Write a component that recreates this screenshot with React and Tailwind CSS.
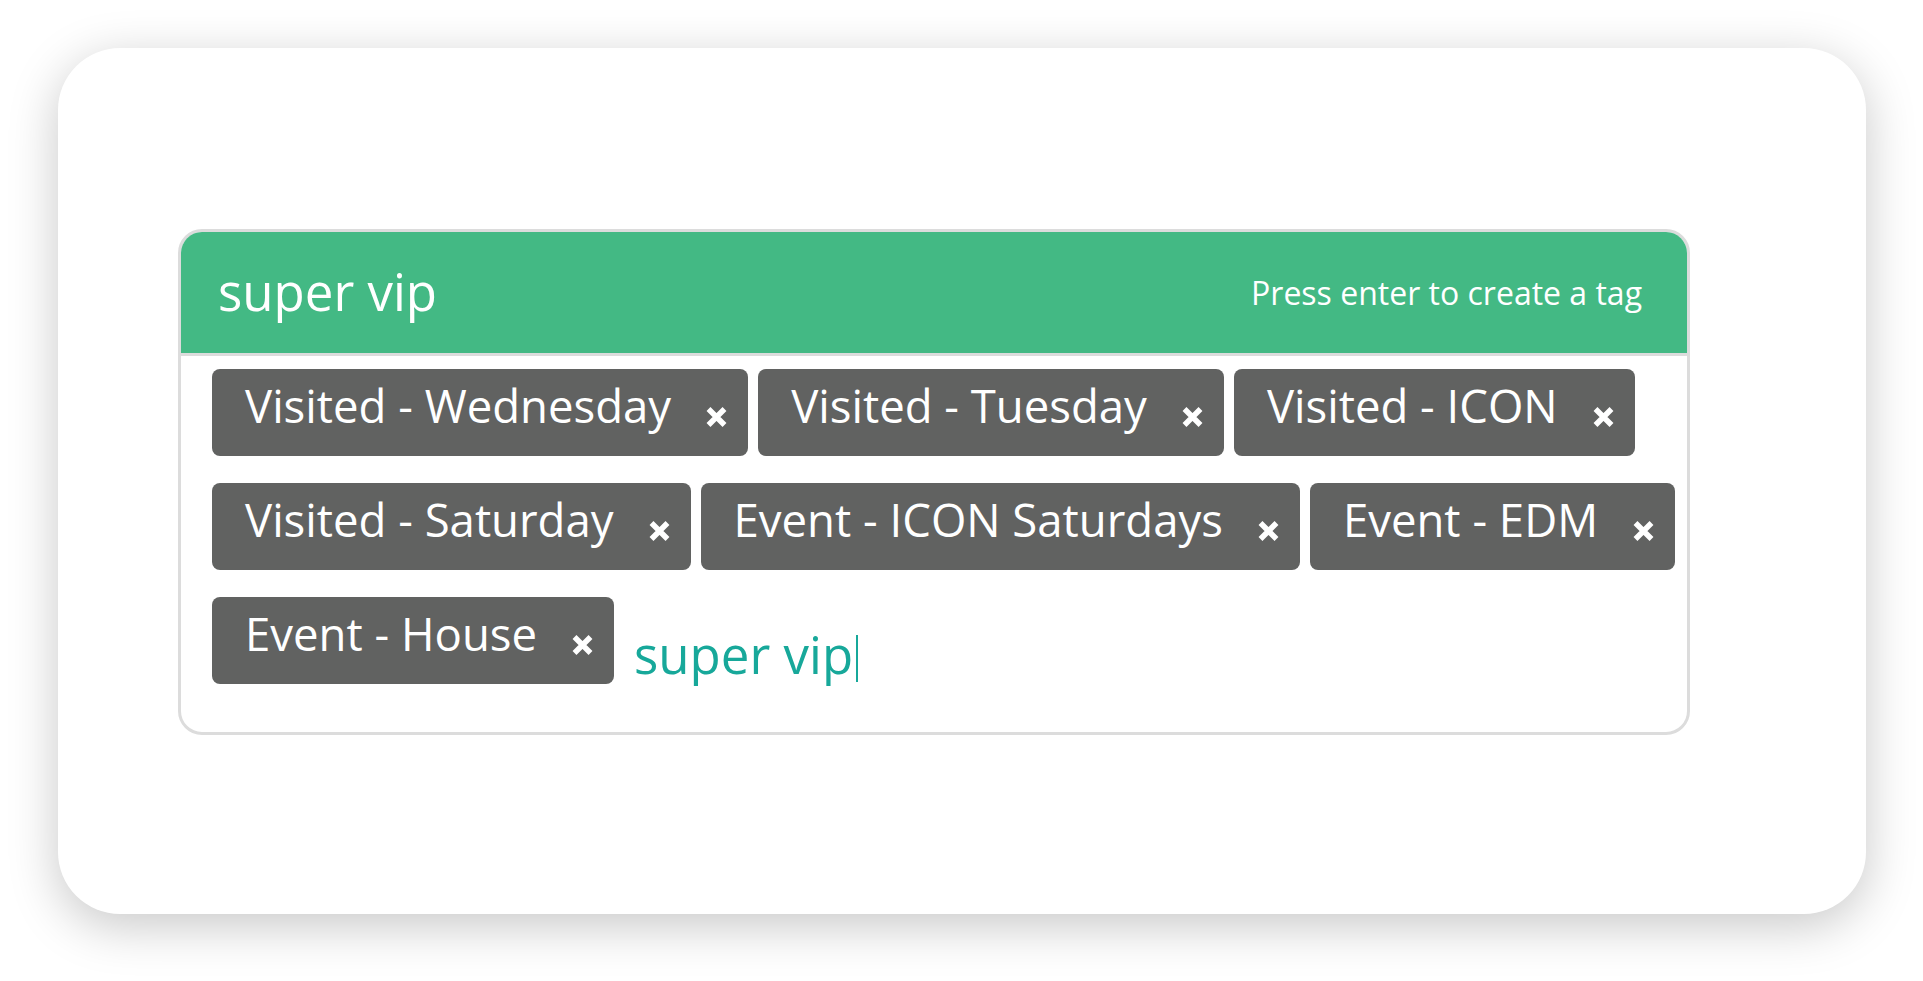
import React from 'react';

// tags already attached to the guest
const tags = [
    'Visited - Wednesday',
    'Visited - Tuesday',
    'Visited - ICON',
    'Visited - Saturday',
    'Event - ICON Saturdays',
    'Event - EDM',
    'Event - House',
];

const CloseIcon = () => (
    <svg width="21" height="20" viewBox="0 0 21 20" className="block">
        <path d="M2.5 2L18.5 18M18.5 2L2.5 18" stroke="white" strokeWidth="5.5" />
    </svg>
);

const Tag = ({ label }) => (
    <div className="flex h-[87px] items-start rounded-[8px] bg-[#616261] pl-[33px] pr-[21px] pt-[14px] text-white">
        <span className="text-[45.5px] leading-none whitespace-nowrap">{label}</span>
        <span className="ml-[35px] mt-[24px]">
            <CloseIcon />
        </span>
    </div>
);

const App = () => {
    return (
        <div className="min-h-screen bg-white pt-[48px] pl-[58px] font-['Open_Sans',sans-serif]">
            <div className="h-[866px] w-[1808px] rounded-[62px] bg-white pt-[181px] pl-[120px] shadow-[0_12px_50px_rgba(0,0,0,0.22)]">
                <div className="w-[1512px] overflow-hidden rounded-[24px] border-[3px] border-[#dcdcdc] bg-white">
                    <div className="flex h-[124px] items-center justify-between border-b-[3px] border-[#dcdcdc] bg-[#43b984] pl-[37px] pr-[45px] text-white">
                        <span className="pb-[2px] text-[51px] leading-none">super vip</span>
                        <span className="text-[32px] leading-none">Press enter to create a tag</span>
                    </div>
                    <div className="flex flex-wrap items-start gap-x-[10px] gap-y-[27px] pt-[13px] pb-[48px] pl-[31px] pr-0">
                        {tags.map(tag => (
                            <Tag key={tag} label={tag} />
                        ))}
                        <div className="ml-[10px] mt-[32px] flex items-start text-[51px] leading-none text-[#17a89a]">
                            <span className="whitespace-nowrap">super vip</span>
                            <span className="ml-[3px] mt-[6px] h-[47px] w-[2px] bg-[#17a89a]" />
                        </div>
                    </div>
                </div>
            </div>
        </div>
    );
};

export default App;
